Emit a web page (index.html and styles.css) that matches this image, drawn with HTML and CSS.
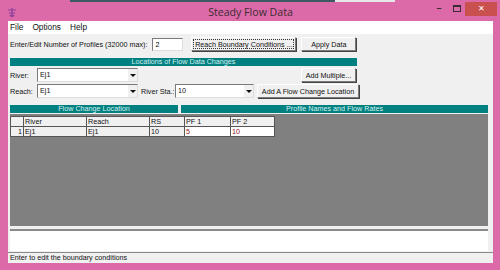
FILE: index.html
```html
<!DOCTYPE html>
<html lang="en">
<head>
    <meta charset="UTF-8">
    <title>Steady Flow Data</title>
    <link rel="stylesheet" href="styles.css">
</head>
<body>
    <div class="win">
        <div class="behind"><span class="b1"></span><span class="b2"></span></div>
        <div class="titlebar">
            <svg class="appicon" width="10" height="9" viewBox="0 0 10 9">
                <path d="M1 2h8M2 5h6M5 0v9M3 7l2 2 2-2" stroke="#8a3f9a" stroke-width="1.2" fill="none"/>
            </svg>
            <div class="title">Steady Flow Data</div>
            <div class="wbtn min">&#8211;</div>
            <div class="wbtn max"><span></span></div>
            <div class="wbtn close">&#10005;</div>
        </div>
        <div class="client">
            <div class="menu">
                <span>File</span><span>Options</span><span>Help</span>
            </div>
            <div class="row r1">
                <span class="lbl">Enter/Edit Number of Profiles (32000 max):</span>
                <input class="txt nprof" type="text" value="2">
                <button class="btn bc focus">Reach Boundary Conditions ...</button>
                <button class="btn apply">Apply Data</button>
            </div>
            <div class="band locs">Locations of Flow Data Changes</div>
            <div class="row r2">
                <span class="lbl w27">River:</span>
                <div class="combo w100"><span>Ej1</span><i></i></div>
                <button class="btn addm">Add Multiple...</button>
            </div>
            <div class="row r3">
                <span class="lbl w27">Reach:</span>
                <div class="combo w100"><span>Ej1</span><i></i></div>
                <span class="lbl sta">River Sta.:</span>
                <div class="combo w78"><span>10</span><i></i></div>
                <button class="btn addl">Add A Flow Change Location</button>
            </div>
            <div class="heads">
                <div class="band fcl">Flow Change Location</div>
                <div class="band pnf">Profile Names and Flow Rates</div>
            </div>
            <div class="grid">
                <table>
                    <tr class="hd">
                        <td class="c0"></td>
                        <td class="c1">River</td>
                        <td class="c2">Reach</td>
                        <td class="c3">RS</td>
                        <td class="c4">PF 1</td>
                        <td class="c5">PF 2</td>
                    </tr>
                    <tr>
                        <td class="c0 rn">1</td>
                        <td class="c1">Ej1</td>
                        <td class="c2">Ej1</td>
                        <td class="c3">10</td>
                        <td class="c4 val">5</td>
                        <td class="c5 val">10</td>
                    </tr>
                </table>
            </div>
            <div class="memo"></div>
            <div class="status">Enter to edit the boundary conditions</div>
        </div>
    </div>
</body>
</html>
```

FILE: styles.css
```css
body {
    margin: 0;
    width: 500px;
    height: 270px;
    overflow: hidden;
    font-family: "Liberation Sans", Arial, sans-serif;
    font-size: 7.2px;
    color: #111;
}

.win {
    background: #dc6aa8;
    height: 270px;
}

.behind {
    display: flex;
    height: 2px;
}

.behind .b1 {
    margin-left: 70px;
    width: 265px;
    background: #3b5a64;
}

.behind .b2 {
    width: 60px;
    background: #e8e8e8;
}

.titlebar {
    display: flex;
    align-items: flex-start;
    height: 19px;
}

.appicon {
    margin: 6px 0 0 7px;
}

.title {
    flex: 1;
    text-align: center;
    font-family: "Open Sans", "Liberation Sans", sans-serif;
    font-size: 10.6px;
    color: #3a2a33;
    padding-top: 3px;
    padding-left: 54px;
}

.wbtn {
    height: 14px;
    color: #3a2a33;
    text-align: center;
    font-size: 9px;
    line-height: 13px;
}

.wbtn.min {
    width: 18px;
    font-weight: bold;
}

.wbtn.max {
    width: 17px;
}

.wbtn.max span {
    display: inline-block;
    width: 6px;
    height: 4px;
    border: 1px solid #3a2a33;
    border-top-width: 2px;
    margin-top: 3px;
}

.wbtn.close {
    width: 32px;
    margin-right: 3px;
    background: #c9504f;
    color: #fff;
    font-size: 8px;
}

.client {
    margin: 0 7px 0 8px;
    height: 242px;
    background: #f0f0f0;
    display: flex;
    flex-direction: column;
}

.menu {
    background: #fff;
    height: 13px;
    line-height: 13px;
    padding-left: 2px;
    font-size: 8.3px;
}

.menu span {
    margin-right: 9px;
}

.row {
    display: flex;
    align-items: center;
    padding-left: 2px;
}

.r1 {
    margin-top: 3px;
    height: 14px;
}

.lbl {
    white-space: nowrap;
}

.txt {
    font: inherit;
    height: 11px;
    border: 1px solid #7a7a7a;
    border-right-color: #ddd;
    border-bottom-color: #ddd;
    padding: 0 2px;
    background: #fff;
    box-sizing: content-box;
}

.nprof {
    width: 25px;
    margin-left: 5px;
}

.btn {
    font: inherit;
    height: 14px;
    padding: 0;
    white-space: nowrap;
    overflow: hidden;
    background: #f0f0f0;
    border: 1px solid #fff;
    border-right-color: #7a7a7a;
    border-bottom-color: #7a7a7a;
    box-shadow: 1px 1px 0 #444;
    color: #111;
}

.btn.focus {
    outline: 1px dotted #333;
    outline-offset: -3px;
}

.bc {
    width: 105px;
    margin-left: 8px;
}

.apply {
    width: 55px;
    margin-left: 5px;
}

.band {
    background: #008080;
    color: #d8f0f0;
    height: 8px;
    line-height: 8px;
    text-align: center;
    font-size: 7.2px;
}

.locs {
    width: 347px;
    margin: 7px 0 0 2px;
}

.r2 {
    margin-top: 2px;
    height: 14px;
}

.r3 {
    margin-top: 2px;
    height: 14px;
}

.w27 {
    width: 27px;
}

.combo {
    display: flex;
    height: 12px;
    background: #fff;
    border: 1px solid #7a7a7a;
    border-right-color: #ddd;
    border-bottom-color: #ddd;
}

.combo span {
    flex: 1;
    padding-left: 2px;
    line-height: 12px;
}

.combo i {
    width: 9px;
    background: #f0f0f0;
    border-left: 1px solid #fff;
    position: relative;
}

.combo i::after {
    content: "";
    position: absolute;
    left: 2px;
    top: 5px;
    border: 3px solid transparent;
    border-top: 3px solid #111;
    border-bottom: 0;
}

.w100 {
    width: 99px;
}

.w78 {
    width: 77px;
}

.sta {
    margin-left: 3px;
    width: 34px;
}

.addm {
    width: 55px;
    margin-left: 163px;
}

.addl {
    width: 102px;
    margin-left: 3px;
}

.heads {
    display: flex;
    margin: 7px 0 0 2px;
    gap: 3px;
}

.fcl {
    width: 168px;
}

.pnf {
    width: 307px;
}

.grid {
    margin: 1px 0 0 2px;
    width: 478px;
    height: 112px;
    background: #808080;
    padding-top: 2px;
    box-sizing: border-box;
}

table {
    border-collapse: collapse;
}

td {
    height: 9px;
    padding: 0 1px;
    border: 1px solid #555;
    background: #f0f0f0;
    line-height: 9px;
    white-space: nowrap;
}

.c0 { width: 10px; }
.c1 { width: 60px; }
.c2 { width: 60px; }
.c3 { width: 32px; }
.c4 { width: 43px; }
.c5 { width: 41px; }

.rn {
    text-align: right;
}

.val {
    background: #fff;
    color: #8a1020;
}

.memo {
    margin: 3px 0 0 2px;
    width: 478px;
    height: 20px;
    background: #fff;
    border-top: 2px solid #8a8a8a;
}

.status {
    margin-top: 1px;
    height: 9px;
    line-height: 9px;
    border-top: 1px solid #8a8a8a;
    padding-left: 2px;
    font-size: 7.2px;
}
```
